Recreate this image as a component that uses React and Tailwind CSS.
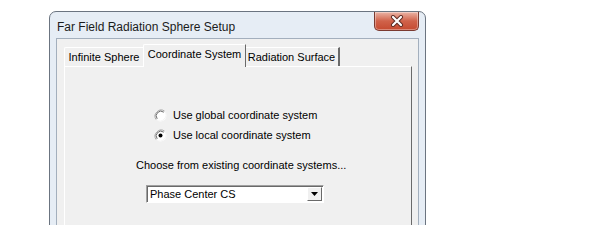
import React from "react";

function Radio({ checked }) {
  return (
    <svg width="13" height="13" viewBox="0 0 13 13" className="shrink-0">
      <circle cx="6.5" cy="6.5" r="6" fill="#ffffff" />
      <path d="M2.3 10.7 A6 6 0 0 1 10.7 2.3" fill="none" stroke="#a0a0a0" strokeWidth="1" />
      <path d="M3.2 9.8 A4.7 4.7 0 0 1 9.8 3.2" fill="none" stroke="#696969" strokeWidth="1" />
      <path d="M10.7 2.3 A6 6 0 0 1 2.3 10.7" fill="none" stroke="#f4f4f4" strokeWidth="1" />
      {checked && <circle cx="6.5" cy="6.5" r="2" fill="#000000" />}
    </svg>
  );
}

export default function App() {
  const font = { fontFamily: '"Liberation Sans", Arial, sans-serif' };
  return (
    <div className="w-[600px] h-[225px] bg-white overflow-hidden pl-[49px] pt-[11px]" style={font}>
      <div className="w-[377px] h-[240px] rounded-t-[7px] border border-[#6b7480] bg-[#e6edf5] flex flex-col">
        <div className="h-[26px] flex items-start justify-between">
          <div className="pl-[7px] pt-[7px] text-[12px] text-[#1b1b1b] leading-[16px]">
            Far Field Radiation Sphere Setup
          </div>
          <div className="mr-[6px] w-[45px] h-[19px] rounded-b-[5px] border border-t-0 border-[#7a3a30] bg-gradient-to-b from-[#eab4a6] via-[#d0624a] to-[#c54a30] flex items-center justify-center shadow-[inset_0_0_0_1px_rgba(255,255,255,0.35)]">
            <svg width="14" height="12" viewBox="0 0 14 12">
              <path d="M3 2 L11 10 M11 2 L3 10" stroke="#5a2a22" strokeWidth="4" strokeLinecap="round" />
              <path d="M3 2 L11 10 M11 2 L3 10" stroke="#ffffff" strokeWidth="2.2" strokeLinecap="round" />
            </svg>
          </div>
        </div>
        <div className="mx-[6px] flex-1 border border-[#a3afbd] bg-[#f0f0f0] flex flex-col pl-[7px] pr-[6px] pt-[4px]">
          <div className="flex items-end h-[23px] text-[11px] text-black">
            <div className="w-[80px] h-[19px] border-t border-l border-white border-r border-r-[#a0a0a0] rounded-tl-[2px] flex items-center justify-center bg-[#f0f0f0]">
              Infinite Sphere
            </div>
            <div className="relative z-10 -ml-[1px] -mr-[1px] w-[103px] h-[23px] border-t border-l border-white border-r border-r-[#6a6a6a] rounded-tl-[2px] flex items-center justify-center bg-[#f0f0f0] pb-[3px] -mb-[1px]">
              Coordinate System
            </div>
            <div className="w-[95px] h-[19px] border-t border-white border-r-2 border-r-[#6a6a6a] flex items-center justify-center bg-[#f0f0f0]">
              Radiation Surface
            </div>
          </div>
          <div className="flex-1 border-t border-l border-white border-r border-r-[#6a6a6a] bg-[#f0f0f0] flex flex-col pt-[38px] text-[11px] text-black">
            <div className="ml-[89px] h-[20px] flex items-center gap-[6px]">
              <Radio checked={false} />
              <span>Use global coordinate system</span>
            </div>
            <div className="ml-[89px] h-[20px] flex items-center gap-[6px]">
              <Radio checked={true} />
              <span>Use local coordinate system</span>
            </div>
            <div className="ml-[71px] mt-[12px] h-[16px] flex items-center">
              Choose from existing coordinate systems...
            </div>
            <div className="ml-[81px] mt-[12px] w-[178px] h-[18px] bg-white border border-t-[#a0a0a0] border-l-[#a0a0a0] border-r-white border-b-white shadow-[inset_1px_1px_0_#696969] flex items-center justify-between">
              <span className="pl-[3px] leading-[14px]">Phase Center CS</span>
              <div className="w-[15px] h-[14px] mr-[1px] bg-[#f0f0f0] border border-t-white border-l-white border-r-[#696969] border-b-[#696969] flex items-center justify-center">
                <svg width="7" height="4" viewBox="0 0 7 4">
                  <path d="M0 0 H7 L3.5 4 Z" fill="#000" />
                </svg>
              </div>
            </div>
          </div>
        </div>
      </div>
    </div>
  );
}
